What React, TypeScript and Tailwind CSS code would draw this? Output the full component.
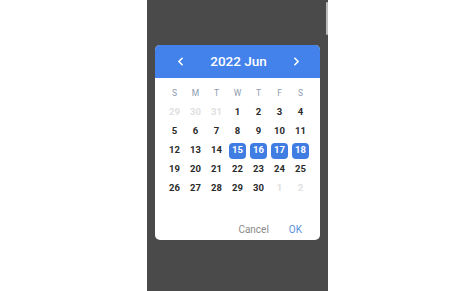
import { ChevronLeft, ChevronRight } from "lucide-react";

const weekdays = ["S", "M", "T", "W", "T", "F", "S"];

// muted = outside current month, selected = picked range
const days: { n: number; muted?: boolean; selected?: boolean }[] = [
  { n: 29, muted: true },
  { n: 30, muted: true },
  { n: 31, muted: true },
  ...Array.from({ length: 30 }, (_, i) => ({
    n: i + 1,
    selected: i + 1 >= 15 && i + 1 <= 18,
  })),
  { n: 1, muted: true },
  { n: 2, muted: true },
];

export default function App() {
  return (
    <div
      className="flex h-[291px] w-[474px] justify-center bg-white"
      style={{ fontFamily: "Roboto, 'Noto Sans', sans-serif" }}
    >
      <div className="relative ml-[1px] h-full w-[181px] bg-[#4a4a4a] px-2 pt-[45px]">
        <div className="absolute right-0 top-[2px] h-[33px] w-[2px] rounded bg-[#bdbdbd]" />

        <div className="overflow-hidden rounded-[5px] bg-white">
          <header className="flex h-[33px] items-center justify-between bg-[#4282ea] pl-[19px] pr-[17px] text-white">
            <ChevronLeft size={13} strokeWidth={3} />
            <h1 className="text-[13.5px] font-medium">2022 Jun</h1>
            <ChevronRight size={13} strokeWidth={3} />
          </header>

          <div className="mx-auto mt-[6px] grid w-[147px] grid-cols-7 auto-rows-[19px]">
            {weekdays.map((d, i) => (
              <div
                key={i}
                className="flex items-center justify-center text-[8.5px] text-[#8c9bb0]"
              >
                {d}
              </div>
            ))}
            {days.map((d, i) => (
              <div key={i} className="flex items-center justify-center">
                {d.selected ? (
                  <span className="flex h-[16px] w-[17px] items-center justify-center rounded-[4px] bg-[#3f7de3] text-[9.5px] font-bold text-white">
                    {d.n}
                  </span>
                ) : (
                  <span
                    className={
                      d.muted
                        ? "text-[9.5px] font-bold text-[#e0e0e0]"
                        : "text-[9.5px] font-bold text-[#2a2a2a]"
                    }
                  >
                    {d.n}
                  </span>
                )}
              </div>
            ))}
          </div>

          <footer className="flex h-[42px] items-center justify-end gap-[20px] pr-[18px] pt-[20px] text-[10px]">
            <span className="text-[#8a8a8a]">Cancel</span>
            <span className="text-[#5a8fdc]">OK</span>
          </footer>
        </div>
      </div>
    </div>
  );
}
